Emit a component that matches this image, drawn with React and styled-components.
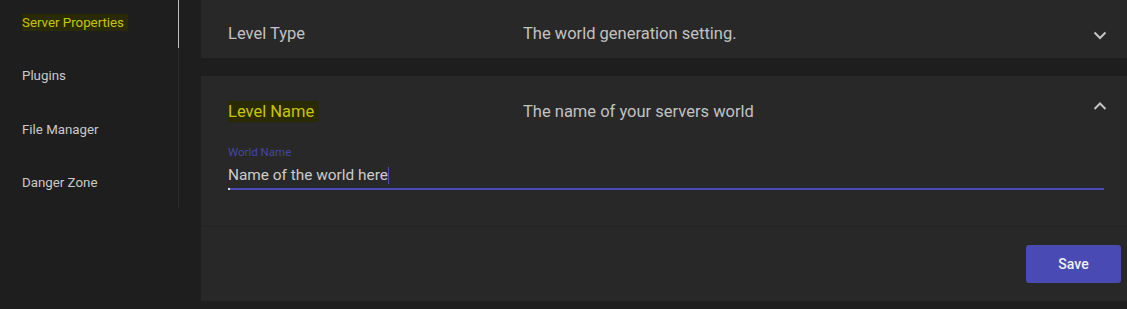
import styled, { createGlobalStyle } from "styled-components";

const GlobalStyle = createGlobalStyle`
  html, body {
    margin: 0;
    padding: 0;
    background: #1e1e1e;
    font-family: Roboto, "Liberation Sans", sans-serif;
  }
`;

const navItems = ["Server Properties", "Plugins", "File Manager", "Danger Zone"];

const Chevron = ({ up }) => (
  <svg width="14" height="10" viewBox="0 0 14 10">
    <path
      d={up ? "M1.5 8 L7 2.5 L12.5 8" : "M1.5 2.5 L7 8 L12.5 2.5"}
      fill="none"
      stroke="#c4c4c4"
      strokeWidth="2"
    />
  </svg>
);

const App = () => {
  return (
    <>
      <GlobalStyle />
      <Page>
        <Sidebar>
          <Nav>
            {navItems.map((item, index) => (
              <NavItem key={item} active={index === 0}>
                {index === 0 ? <Marked>{item}</Marked> : item}
              </NavItem>
            ))}
          </Nav>
        </Sidebar>
        <Main>
          <Panel>
            <Summary top="26px" height="58px">
              <Title>Level Type</Title>
              <Desc>The world generation setting.</Desc>
              <Toggle offset="4px">
                <Chevron />
              </Toggle>
            </Summary>
          </Panel>
          <Panel expanded>
            <Summary top="28px" height="52px">
              <Title>
                <Marked>Level Name</Marked>
              </Title>
              <Desc>The name of your servers world</Desc>
              <Toggle offset="-3px">
                <Chevron up />
              </Toggle>
            </Summary>
            <Details>
              <Label>World Name</Label>
              <InputText>
                Name of the world here<Caret />
              </InputText>
              <Underline />
            </Details>
            <Actions>
              <SaveButton>Save</SaveButton>
            </Actions>
          </Panel>
        </Main>
      </Page>
    </>
  );
};

export default App;

const Page = styled.div`
  display: flex;
  width: 1127px;
  height: 309px;
  overflow: hidden;
  background: #1e1e1e;
`;

const Sidebar = styled.div`
  width: 179px;
  flex-shrink: 0;
`;

const Nav = styled.div`
  display: flex;
  flex-direction: column;
  height: 207px;
  border-right: 1px solid #2b2b2b;
`;

const NavItem = styled.div`
  position: relative;
  height: 53.3px;
  flex-shrink: 0;
  box-sizing: border-box;
  padding: 15px 0 0 22px;
  font-size: 13.3px;
  line-height: 16px;
  color: ${(props) => (props.active ? "#c6c600" : "#c9c9c9")};
  &::after {
    content: "";
    display: ${(props) => (props.active ? "block" : "none")};
    position: absolute;
    right: -1px;
    top: 0;
    width: 1px;
    height: 48px;
    background: #bdbdbd;
  }
`;

const Marked = styled.span`
  background: #2a2a00;
  padding: 1px 4px 1px 0;
`;

const Main = styled.div`
  flex: 1;
  padding-left: 22px;
  display: flex;
  flex-direction: column;
  gap: 18px;
`;

const Panel = styled.div`
  background: #282828;
  width: 100%;
  display: flex;
  flex-direction: column;
  flex-shrink: 0;
`;

const Summary = styled.div`
  display: flex;
  align-items: flex-start;
  height: ${(props) => props.height};
  box-sizing: border-box;
  padding: ${(props) => props.top} 0 0 27px;
  font-size: 16.5px;
  line-height: 16px;
  color: #c2c2c2;
`;

const Title = styled.div`
  width: 295px;
  & > span {
    color: #c6c600;
  }
`;

const Desc = styled.div`
  flex: 1;
`;

const Toggle = styled.div`
  width: 14px;
  margin: ${(props) => props.offset} 20px 0 0;
  display: flex;
`;

const Details = styled.div`
  padding: 18px 23px 36px 27px;
  border-bottom: 1px solid #222;
  display: flex;
  flex-direction: column;
`;

const Label = styled.div`
  font-size: 11.5px;
  line-height: 13px;
  color: #4545a6;
`;

const InputText = styled.div`
  margin-top: 6px;
  font-size: 15.4px;
  line-height: 20px;
  color: #cdcdcd;
  display: flex;
  align-items: center;
`;

const Caret = styled.span`
  display: inline-block;
  width: 1px;
  height: 17px;
  background: #4a4ab8;
`;

const Underline = styled.div`
  margin-top: 3px;
  height: 2px;
  background: #4a4ab8;
  border-left: 2px solid #ddd;
`;

const Actions = styled.div`
  display: flex;
  justify-content: flex-end;
  padding: 18px 6px 18px 0;
`;

const SaveButton = styled.button`
  width: 95px;
  height: 38px;
  border: none;
  border-radius: 3px;
  background: #4a4ab4;
  color: #f0f0f0;
  font-family: Roboto, "Liberation Sans", sans-serif;
  font-size: 14px;
  font-weight: 500;
`;
